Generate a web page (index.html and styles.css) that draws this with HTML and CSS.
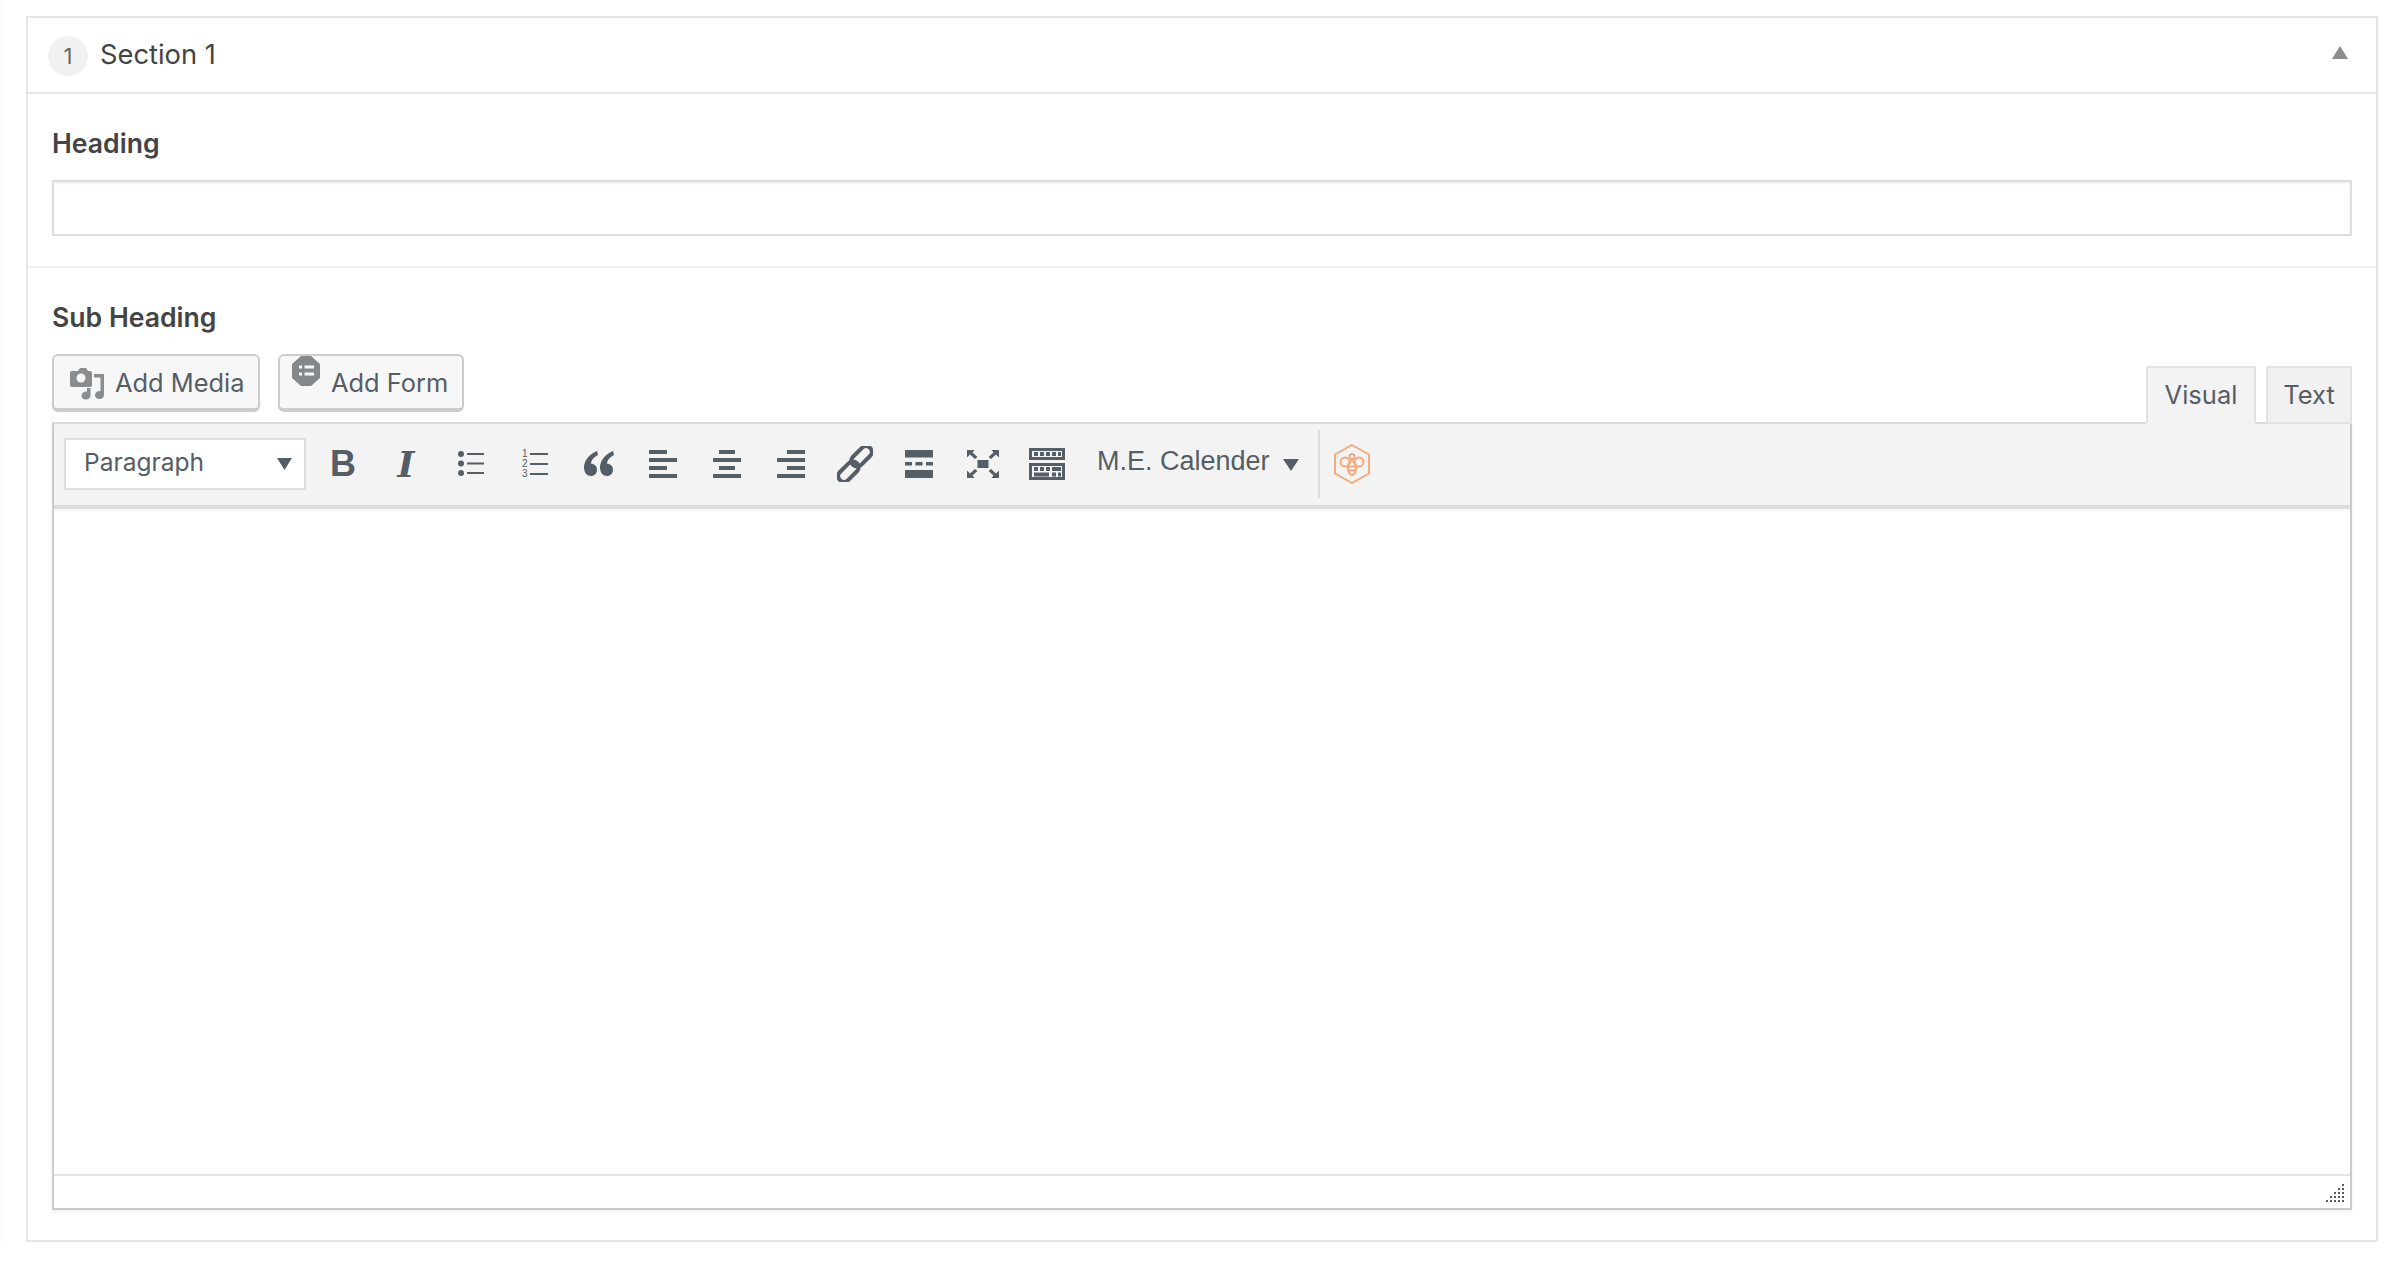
FILE: index.html
```html
<!DOCTYPE html>
<html lang="en">
<head>
<meta charset="utf-8">
<title>Section 1</title>
<link rel="stylesheet" href="styles.css">
</head>
<body>
<div class="page">
  <section class="box">
    <header class="box-head">
      <span class="num">1</span>
      <span class="title">Section 1</span>
      <svg class="collapse" width="16" height="13" viewBox="0 0 16 13"><path d="M8 0 16 13H0Z"/></svg>
    </header>
    <div class="field">
      <label class="label">Heading</label>
      <div class="text-input"></div>
    </div>
    <div class="field last">
      <label class="label">Sub Heading</label>
      <div class="tools">
        <button class="btn media">
          <svg width="34" height="33" viewBox="0 0 34 33"><path d="M6 4h2l2-3h6l2 3h2a2 2 0 0 1 2 2v12a2 2 0 0 1-2 2H2a2 2 0 0 1-2-2V6a2 2 0 0 1 2-2Z" fill="#8a8d90"/><circle cx="11" cy="11" r="4.500" fill="#f7f7f7"/><path d="M24 7h10v21a4.500 4 0 1 1-3.500-3.800V10.500H24Z" fill="#8a8d90"/><path d="M17 21h3.500v7.500a4.500 4 0 1 1-3.500-3.800Z" fill="#8a8d90"/></svg>
          <span>Add Media</span>
        </button>
        <button class="btn form">
          <svg width="28" height="30" viewBox="0 0 28 30"><path d="M9 0h10l9 8v14l-9 8H9l-9-8V8Z" fill="#85888b"/><path d="M7 9.500h3v3H7Zm5.500 0H22v3h-9.500ZM7 16.500h3v3H7Zm5.500 0H22v3h-9.500Z" fill="#f7f7f7"/></svg>
          <span>Add Form</span>
        </button>
        <div class="tabs">
          <span class="tab active">Visual</span>
          <span class="tab">Text</span>
        </div>
      </div>
      <div class="editor">
        <div class="toolbar">
          <div class="select"><span>Paragraph</span><svg width="15" height="12" viewBox="0 0 15 12"><path d="M0 0h15L7.500 12Z"/></svg></div>
          <div class="icons">
            <span class="tb"><span class="glyph bold">B</span></span>
            <span class="tb"><span class="glyph ital">I</span></span>
            <span class="tb"><svg width="26" height="25" viewBox="0 0 26 25"><circle cx="3" cy="3" r="3"/><circle cx="3" cy="12.500" r="3"/><circle cx="3" cy="22" r="3"/><path d="M9 2h17v2H9Zm0 9.500h17v2H9ZM9 21h17v2H9Z"/></svg></span>
            <span class="tb"><svg class="numlist" width="26" height="29" viewBox="0 0 26 29"><text x="0" y="8" class="mini">1</text><text x="0" y="18" class="mini">2</text><text x="0" y="28" class="mini">3</text><path d="M8 4h18v2H8Zm0 10h18v2H8Zm0 10h18v2H8Z"/></svg></span>
            <span class="tb"><svg width="30" height="25" viewBox="0 0 30 25"><path d="M13 0C6 3 0 9 0 16.500 0 21.500 3 25 7 25c3.500 0 6-2.700 6-6.300 0-3.800-2.700-6.200-6.200-6 .6-3.800 3-6.300 7.200-8.700Z"/><path d="M29 0C22 3 16 9 16 16.500 16 21.500 19 25 23 25c3.500 0 6-2.700 6-6.300 0-3.800-2.700-6.200-6.200-6 .6-3.800 3-6.300 7.200-8.700Z"/></svg></span>
            <span class="tb"><svg width="28" height="28" viewBox="0 0 28 28"><path d="M0 0h18v4H0Zm0 8h28v4H0Zm0 8h18v4H0Zm0 8h28v4H0Z"/></svg></span>
            <span class="tb"><svg width="28" height="28" viewBox="0 0 28 28"><path d="M6 0h16v4H6ZM0 8h28v4H0Zm6 8h16v4H6ZM0 24h28v4H0Z"/></svg></span>
            <span class="tb"><svg width="28" height="28" viewBox="0 0 28 28"><path d="M10 0h18v4H10ZM0 8h28v4H0Zm10 8h18v4H10ZM0 24h28v4H0Z"/></svg></span>
            <span class="tb"><svg width="36" height="36" viewBox="0 0 36 36"><g transform="rotate(-45 18 18)" fill="none" stroke="#555d66" stroke-width="4"><rect x="16" y="11.500" width="24" height="11.500" rx="5.700"/><rect x="-4" y="13" width="24" height="11.500" rx="5.700"/></g></svg></span>
            <span class="tb"><svg width="28" height="28" viewBox="0 0 28 28"><path d="M0 0h28v7.500H0Zm0 12h7v3.500H0Zm10.500 0h7v3.500h-7Zm10.500 0h7v3.500h-7ZM0 20h28v8H0Z"/></svg></span>
            <span class="tb"><svg width="32" height="28" viewBox="0 0 32 28"><path d="M10.500 10h11v8h-11Z"/><path d="M0 0h7.500L5.500 2.500 10.500 7 8 9 3 4.500 0 7.500Zm32 0h-7.500l2 2.500-5 4.500 2.500 2 5-4.500 3 3ZM0 28h7.500l-2-2.500 5-4.500L8 19l-5 4.500-3-3Zm32 0h-7.500l2-2.500-5-4.500 2.500-2 5 4.500 3-3Z"/></svg></span>
            <span class="tb"><svg width="36" height="32" viewBox="0 0 36 32"><path fill-rule="evenodd" d="M0 0h36v12H0Zm3 3v6h30V3ZM0 15h36v17H0Zm3 3v11h30V18Z"/><path d="M5 4h4v4H5Zm6 0h4v4h-4Zm6 0h4v4h-4Zm6 0h4v4h-4Zm6 0h3v4h-3ZM5 19h4v4H5Zm6 0h4v4h-4Zm6 0h4v4h-4Zm6 0h9v4h-9ZM5 24.500h15v4H5Zm18 0h4v4h-4Zm6 0h3v4h-3Z"/></svg></span>
          </div>
          <div class="menu"><span>M.E. Calender</span><svg width="16" height="12" viewBox="0 0 16 12"><path d="M0 0h16L8 12Z"/></svg></div>
          <span class="sep"></span>
          <svg class="bee" width="36" height="40" viewBox="0 0 36 40"><g fill="none" stroke="#f4ab7c" stroke-width="2"><path d="M18 1 35 10.500v19L18 39 1 29.500v-19Z"/><circle cx="11" cy="18" r="4.500"/><circle cx="25" cy="18" r="4.500"/><ellipse cx="18" cy="24" rx="4" ry="7"/><circle cx="18" cy="12.500" r="2.500"/><path d="M14.500 22.500h7M15 26.500h6"/></g></svg>
        </div>
        <div class="content"></div>
        <div class="status">
          <svg width="18" height="18" viewBox="0 0 18 18"><path d="M16 0h2v2h-2Zm-4 4h2v2h-2Zm4 0h2v2h-2ZM8 8h2v2H8Zm4 0h2v2h-2Zm4 0h2v2h-2ZM4 12h2v2H4Zm4 0h2v2H8Zm4 0h2v2h-2Zm4 0h2v2h-2ZM0 16h2v2H0Zm4 0h2v2H4Zm4 0h2v2H8Zm4 0h2v2h-2Zm4 0h2v2h-2Z"/></svg>
        </div>
      </div>
    </div>
  </section>
</div>
</body>
</html>
```
FILE: styles.css
```css
* { box-sizing: border-box; }
html, body { margin: 0; padding: 0; background: #fff; }
body { font-family: Inter, "Liberation Sans", sans-serif; color: #444; height: 1268px; overflow: hidden; }
.page { margin-left: 1px; border-left: 1px solid #f6f6f6; padding: 16px 22px 0 24px; }
.box { border: 2px solid #e5e5e5; background: #fff; }
.box-head { height: 76px; border-bottom: 2px solid #e5e5e5; display: flex; align-items: center; padding: 0 28px 0 20px; }
.num { width: 40px; height: 40px; border-radius: 50%; background: #f1f1f1; color: #666; font-size: 22px; display: flex; align-items: center; justify-content: center; margin-right: 12px; margin-top: 2px; }
.title { font-size: 27.300px; color: #444; flex: 1; margin-top: -2px; }
.collapse { fill: #8c8c8c; margin-top: -6px; }
.field { padding: 31px 24px 30px; border-bottom: 2px solid #f1f1f1; }
.field.last { padding-bottom: 30px; border-bottom: 0; }
.label { display: block; font-size: 26.600px; font-weight: 600; line-height: 36px; margin-bottom: 19px; color: #444; }
.text-input { height: 56px; border: 2px solid #ddd; background: #fff; box-shadow: inset 0 2px 2px rgba(0,0,0,.05); }
.tools { display: flex; height: 68px; align-items: flex-start; }
.btn { height: 58px; border: 2px solid #ccc; border-bottom-width: 4px; border-radius: 6px; background: #f7f7f7; font: 400 25.400px Inter, "Liberation Sans", sans-serif; color: #555d66; display: flex; align-items: center; padding: 0; }
.btn.media { width: 208px; padding-left: 16px; gap: 11px; margin-right: 18px; }
.btn.form { width: 186px; padding-left: 12px; gap: 11px; }
.btn.media svg { margin-top: 2px; }
.btn.form svg { margin-top: -22px; }
.tabs { margin-left: auto; display: flex; gap: 10px; align-self: flex-end; height: 58px; margin-bottom: -2px; position: relative; z-index: 1; }
.tab { height: 58px; border: 2px solid #e2e2e2; background: #f1f1f1; color: #555d66; font-size: 25.500px; display: flex; align-items: center; justify-content: center; width: 86px; padding-bottom: 2px; }
.tab.active { width: 110px; background: #f3f3f3; border-bottom-color: #f3f3f3; }
.editor { border: 2px solid #ccc; border-top-color: #ddd; box-shadow: 0 2px 3px rgba(0,0,0,.05); background: #fff; }
.toolbar { height: 85px; background: #f3f3f3; border-bottom: 4px solid #ddd; box-shadow: 0 2px 2px rgba(0,0,0,.04); display: flex; align-items: center; padding-left: 10px; position: relative; }
.select { width: 242px; height: 52px; background: #fff; border: 2px solid #ddd; display: flex; align-items: center; justify-content: space-between; padding: 0 12px 3px 18px; font-size: 24.500px; color: #555d66; margin-top: -2px; }
.select svg { fill: #555d66; margin-top: 4px; }
.icons { display: flex; margin-left: 5px; margin-top: -2px; }
.tb { width: 64px; height: 40px; display: flex; align-items: center; justify-content: center; flex: none; }
.tb svg { fill: #555d66; }
.numlist { overflow: visible; }
.glyph { color: #555d66; font-size: 36px; line-height: 40px; }
.bold { font-family: "Liberation Sans", sans-serif; font-weight: 700; }
.ital { font-family: "DejaVu Serif", serif; font-weight: 700; font-style: italic; margin-left: -2px; }
.mini { font: 400 10px "Liberation Sans", sans-serif; fill: #555d66; }
.menu { display: flex; align-items: center; gap: 13px; margin-left: 18px; font-family: "Liberation Sans", sans-serif; font-size: 27px; color: #555d66; margin-top: -6px; }
.menu svg { fill: #555d66; margin-top: 6px; }
.sep { width: 2px; height: 68px; background: #ddd; margin-left: 19px; margin-top: -2px; }
.bee { margin-left: 14px; margin-top: -2px; }
.content { height: 667px; border-bottom: 2px solid #e5e5e5; }
.status { height: 32px; display: flex; justify-content: flex-end; align-items: flex-end; padding: 0 6px 6px 0; }
.status svg { fill: #555d66; }
```
